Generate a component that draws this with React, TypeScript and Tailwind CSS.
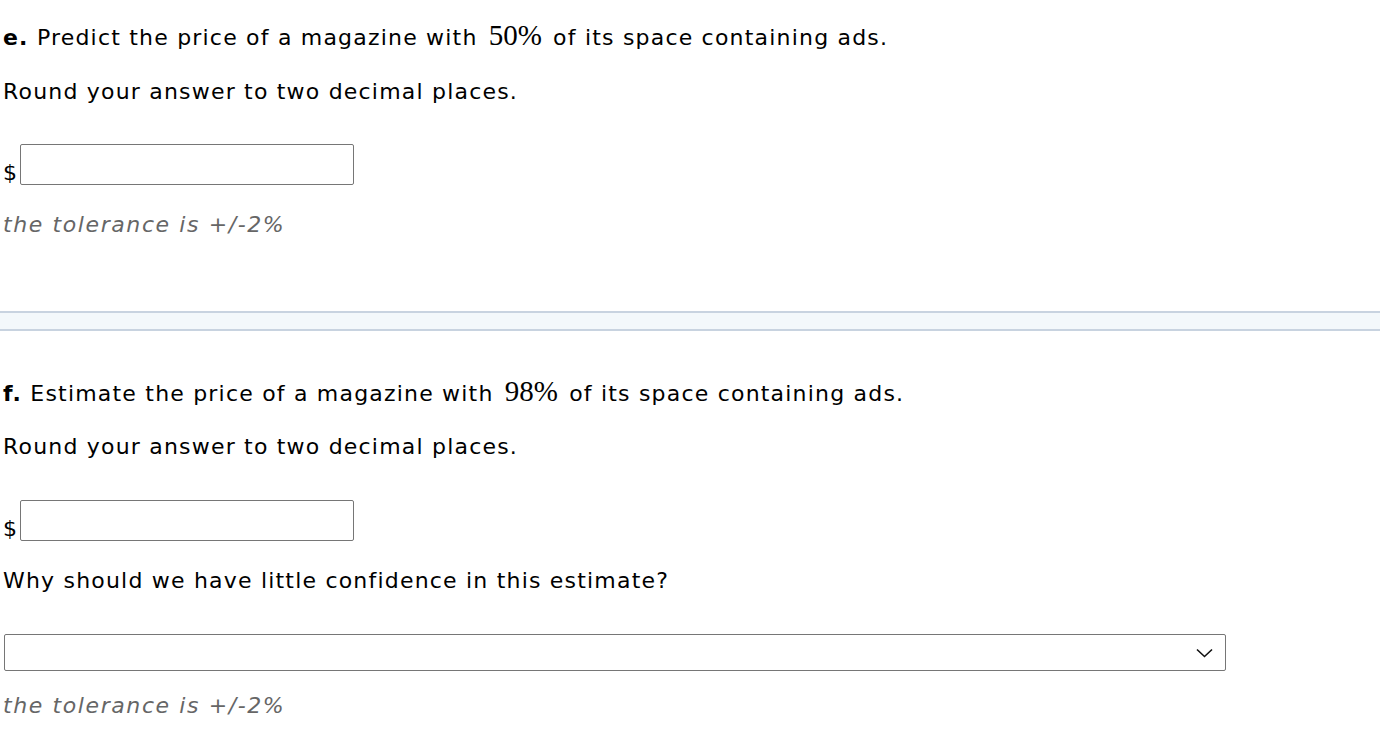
import React from 'react';

const Math: React.FC<{ children: React.ReactNode }> = ({ children }) => (
  <span className="font-['Liberation_Serif','Times_New_Roman',serif] text-[29px] leading-none tracking-normal mx-[3px]">
    {children}
  </span>
);

const MoneyInput: React.FC = () => (
  <div className="flex items-end h-[41px]">
    <span className="leading-none mb-[1px] mr-[3px] tracking-normal">$</span>
    <input
      type="text"
      className="w-[334px] h-[41px] border border-[#767676] rounded-[2px] bg-white outline-none px-2"
    />
  </div>
);

const Tolerance: React.FC<{ className?: string }> = ({ className }) => (
  <p className={`italic text-[#666666] leading-[32px] tracking-[1.6px] ${className ?? ''}`}>the tolerance is +/-2%</p>
);

export default function App() {
  return (
    <div className="min-h-screen bg-white text-black font-['DejaVu_Sans','Verdana',sans-serif] text-[22px] tracking-[1.2px]">
      {/* Part e */}
      <section className="px-[3px] pt-[21px]">
        <p className="leading-[32px]">
          <b>e.</b> Predict the price of a magazine with <Math>50%</Math> of its space containing ads.
        </p>
        <p className="leading-[32px] mt-[22px]">Round your answer to two decimal places.</p>
        <div className="mt-[36px]">
          <MoneyInput />
        </div>
        <Tolerance className="mt-[24px]" />
      </section>

      {/* Divider */}
      <div className="mt-[70px] h-[20px] border-y-2 border-[#c8d3e0] bg-[#f3f8fb]" />

      {/* Part f */}
      <section className="px-[3px] pt-[46px]">
        <p className="leading-[32px]">
          <b>f.</b> Estimate the price of a magazine with <Math>98%</Math> of its space containing ads.
        </p>
        <p className="leading-[32px] mt-[21px]">Round your answer to two decimal places.</p>
        <div className="mt-[37px]">
          <MoneyInput />
        </div>
        <p className="leading-[32px] mt-[24px]">Why should we have little confidence in this estimate?</p>
        <div className="mt-[37px] ml-[1px] w-[1222px] h-[37px] border border-[#767676] rounded-[2px] flex items-center justify-end pr-[12px]">
          <svg width="17" height="10" viewBox="0 0 17 10" fill="none">
            <path d="M1 1.5 L8.5 8.5 L16 1.5" stroke="#111" strokeWidth="1.6" />
          </svg>
        </div>
        <Tolerance className="mt-[19px]" />
      </section>
    </div>
  );
}
